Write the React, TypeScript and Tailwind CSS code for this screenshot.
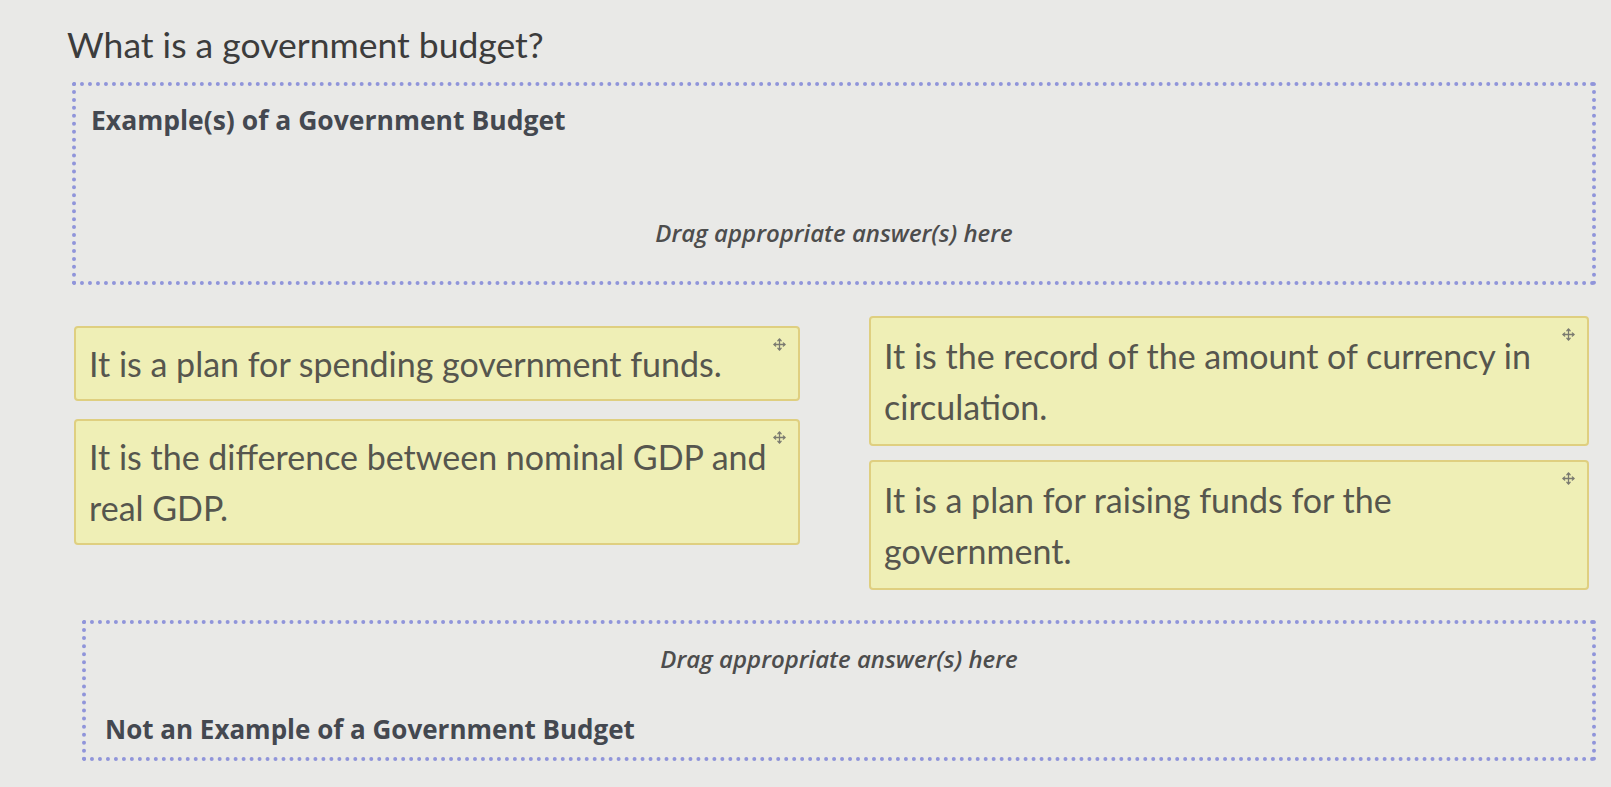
import React from "react";

function MoveIcon() {
  return (
    <svg width="13" height="13" viewBox="0 0 24 24" fill="none" stroke="#7a7a70" strokeWidth="2.4" strokeLinecap="round" strokeLinejoin="round">
      <path d="M12 2v20M2 12h20" />
      <path d="M9 5l3-3 3 3M9 19l3 3 3-3M5 9l-3 3 3 3M19 9l3 3-3 3" />
    </svg>
  );
}

function Card({ lines, tall }: { lines: string[]; tall?: boolean }) {
  return (
    <div
      className={
        "relative rounded-[4px] border-2 border-[#dfcf80] bg-[#efefb6] pl-[13px] pr-[24px] text-[34px] leading-[51px] text-[#56564e] whitespace-nowrap " +
        (tall ? "py-[12px]" : "py-[10px]")
      }
    >
      {lines.map((l, i) => (
        <React.Fragment key={i}>
          {i > 0 && <br />}
          {l}
        </React.Fragment>
      ))}
      <span className="absolute right-[12px] top-[10px]">
        <MoveIcon />
      </span>
    </div>
  );
}

export default function App() {
  return (
    <div className="min-h-screen w-full bg-[#e9e9e7] font-['Lato',sans-serif] pl-[67px] pr-[15px] pt-[22px] pb-[26px]">
      <h1 className="text-[35.5px] leading-[46px] font-normal text-[#3c3c3c]">What is a government budget?</h1>

      <div className="mt-[14px] ml-[5px] h-[203px] rounded-[2px] border-[4px] border-dotted border-[#9095da] px-[15px] pt-[17px]">
        <div className="font-['Open_Sans',sans-serif] text-[26.5px] leading-[34px] font-bold text-[#444850]">Example(s) of a Government Budget</div>
        <div className="mt-[81px] text-center font-['Open_Sans',sans-serif] text-[24px] leading-[30px] font-semibold italic text-[#4d4d4d]">Drag appropriate answer(s) here</div>
      </div>

      <div className="mt-[31px] ml-[7px] grid grid-cols-[726px_720px] gap-x-[69px] items-start">
        <div className="mt-[10px] flex flex-col gap-[18px]">
          <Card lines={["It is a plan for spending government funds."]} />
          <Card lines={["It is the difference between nominal GDP and", "real GDP."]} />
        </div>
        <div className="flex flex-col gap-[14px]">
          <Card tall lines={["It is the record of the amount of currency in", "circulation."]} />
          <Card tall lines={["It is a plan for raising funds for the", "government."]} />
        </div>
      </div>

      <div className="mt-[30px] ml-[15px] h-[141px] rounded-[2px] border-[4px] border-dotted border-[#9095da] px-[19px] pt-[20px]">
        <div className="text-center font-['Open_Sans',sans-serif] text-[24px] leading-[30px] font-semibold italic text-[#4d4d4d]">Drag appropriate answer(s) here</div>
        <div className="mt-[38px] font-['Open_Sans',sans-serif] text-[26px] leading-[34px] font-bold text-[#444850]">Not an Example of a Government Budget</div>
      </div>
    </div>
  );
}
